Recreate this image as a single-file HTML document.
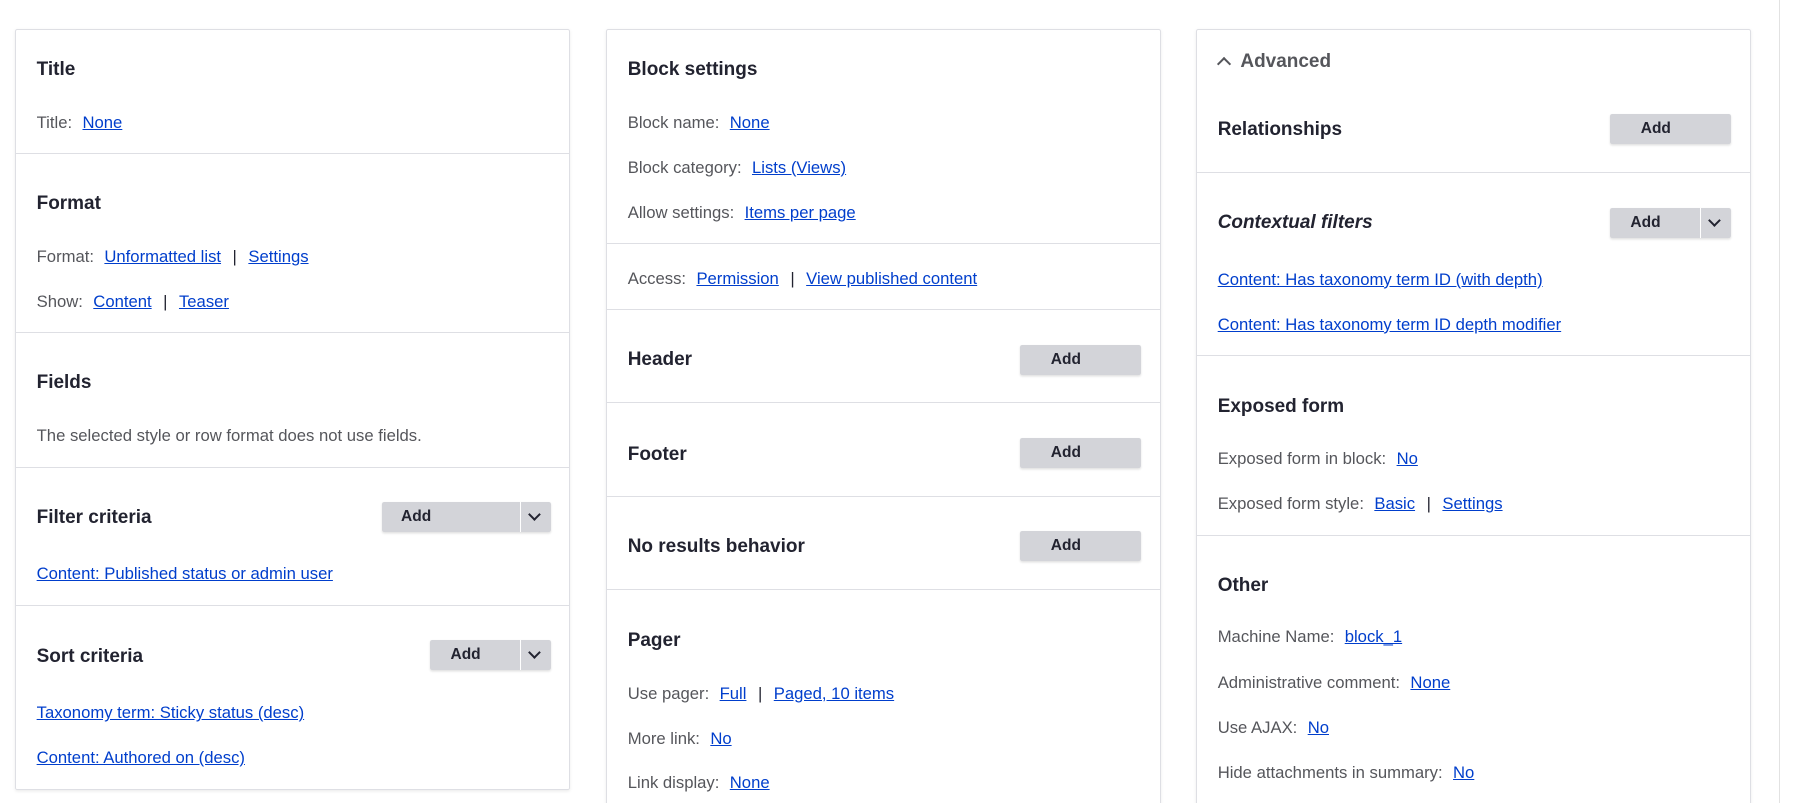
<!DOCTYPE html>
<html><head><meta charset="utf-8"><style>
html,body{margin:0;padding:0;background:#fff;overflow:hidden}
body{width:1805px;height:803px;font-family:"Liberation Sans",sans-serif}
#w{zoom:1.15;position:relative;width:1569px;height:698px;overflow:hidden}
.card{position:absolute;top:25px;background:#fff;border:1px solid #dedfe4;border-radius:2px;box-shadow:0 1px 3px rgba(0,0,0,.08);width:481px;overflow:hidden}
.t{position:absolute;left:18px;line-height:20px;white-space:nowrap;margin-top:1px}
.h{font-weight:bold;font-size:16.5px;color:#222330}
.p{font-size:14.5px;color:#55565b}
.p a{color:#003ecc;text-decoration:underline;margin-left:5px}
.sep{margin:0 10px;color:#222330}
.d{position:absolute;left:0;right:0;height:1px;background:#dedfe4}
.b{position:absolute;height:26px;background:#d3d4d9;border-radius:2px;box-shadow:0 1px 2px rgba(0,0,0,.12);font-weight:bold;font-size:13.5px;color:#222330;line-height:26px}
.b span{position:absolute;left:0;top:0;bottom:0;text-align:center}
.b i{position:absolute;right:0;top:0;bottom:0;width:26px;border-left:1px solid #fff}
.b i:after{content:"";position:absolute;left:8px;top:7px;width:6px;height:6px;border-right:2px solid #222330;border-bottom:2px solid #222330;transform:rotate(45deg)}
</style></head><body><div id="w">
<div style="position:absolute;left:1547px;top:0;width:1px;height:698px;background:#e2e2e2"></div>

<div class="card" style="left:13px;height:660px">
<div class="t h" style="top:24px">Title</div>
<div class="t p" style="top:70px">Title: <a>None</a></div>
<div class="d" style="top:107px"></div>
<div class="t h" style="top:140px">Format</div>
<div class="t p" style="top:186px">Format: <a>Unformatted list</a><span class="sep">|</span><a style="margin:0">Settings</a></div>
<div class="t p" style="top:225px">Show: <a>Content</a><span class="sep">|</span><a style="margin:0">Teaser</a></div>
<div class="d" style="top:263px"></div>
<div class="t h" style="top:296px">Fields</div>
<div class="t p" style="top:342px">The selected style or row format does not use fields.</div>
<div class="d" style="top:380px"></div>
<div class="t h" style="top:413px">Filter criteria</div>
<div class="b" style="left:318px;top:411px;width:147px"><span style="width:60px;left:0">Add</span><i></i></div>
<div class="t p" style="top:462px"><a style="margin:0">Content: Published status or admin user</a></div>
<div class="d" style="top:500px"></div>
<div class="t h" style="top:534px">Sort criteria</div>
<div class="b" style="left:360px;top:531px;width:105px"><span style="width:62px">Add</span><i></i></div>
<div class="t p" style="top:583px"><a style="margin:0">Taxonomy term: Sticky status (desc)</a></div>
<div class="t p" style="top:622px"><a style="margin:0">Content: Authored on (desc)</a></div>
</div>

<div class="card" style="left:527px;height:700px">
<div class="t h" style="top:24px">Block settings</div>
<div class="t p" style="top:70px">Block name: <a>None</a></div>
<div class="t p" style="top:109px">Block category: <a>Lists (Views)</a></div>
<div class="t p" style="top:148px">Allow settings: <a>Items per page</a></div>
<div class="d" style="top:185px"></div>
<div class="t p" style="top:205px">Access: <a>Permission</a><span class="sep">|</span><a style="margin:0">View published content</a></div>
<div class="d" style="top:243px"></div>
<div class="t h" style="top:276px">Header</div>
<div class="b" style="left:359px;top:274px;width:105px"><span style="width:80px">Add</span></div>
<div class="d" style="top:324px"></div>
<div class="t h" style="top:358px">Footer</div>
<div class="b" style="left:359px;top:355px;width:105px"><span style="width:80px">Add</span></div>
<div class="d" style="top:405px"></div>
<div class="t h" style="top:438px">No results behavior</div>
<div class="b" style="left:359px;top:436px;width:105px"><span style="width:80px">Add</span></div>
<div class="d" style="top:486px"></div>
<div class="t h" style="top:520px">Pager</div>
<div class="t p" style="top:566px">Use pager: <a>Full</a><span class="sep">|</span><a style="margin:0">Paged, 10 items</a></div>
<div class="t p" style="top:605px">More link: <a>No</a></div>
<div class="t p" style="top:644px">Link display: <a>None</a></div>
</div>

<div class="card" style="left:1040px;height:700px">
<div class="t" style="top:17px;font-weight:bold;font-size:16.5px;color:#55565b"><span style="display:inline-block;width:7px;height:7px;border-left:2px solid #55565b;border-top:2px solid #55565b;transform:rotate(45deg);margin:0 10px 0 1px;position:relative;top:1px"></span>Advanced</div>
<div class="t h" style="top:76px">Relationships</div>
<div class="b" style="left:359px;top:73px;width:105px"><span style="width:80px">Add</span></div>
<div class="d" style="top:124px"></div>
<div class="t h" style="top:157px;font-style:italic">Contextual filters</div>
<div class="b" style="left:359px;top:155px;width:105px"><span style="width:62px">Add</span><i></i></div>
<div class="t p" style="top:206px"><a style="margin:0">Content: Has taxonomy term ID (with depth)</a></div>
<div class="t p" style="top:245px"><a style="margin:0">Content: Has taxonomy term ID depth modifier</a></div>
<div class="d" style="top:283px"></div>
<div class="t h" style="top:317px">Exposed form</div>
<div class="t p" style="top:362px">Exposed form in block: <a>No</a></div>
<div class="t p" style="top:401px">Exposed form style: <a>Basic</a><span class="sep">|</span><a style="margin:0">Settings</a></div>
<div class="d" style="top:439px"></div>
<div class="t h" style="top:472px">Other</div>
<div class="t p" style="top:517px">Machine Name: <a>block_1</a></div>
<div class="t p" style="top:557px">Administrative comment: <a>None</a></div>
<div class="t p" style="top:596px">Use AJAX: <a>No</a></div>
<div class="t p" style="top:635px">Hide attachments in summary: <a>No</a></div>
</div>
</div></body></html>
